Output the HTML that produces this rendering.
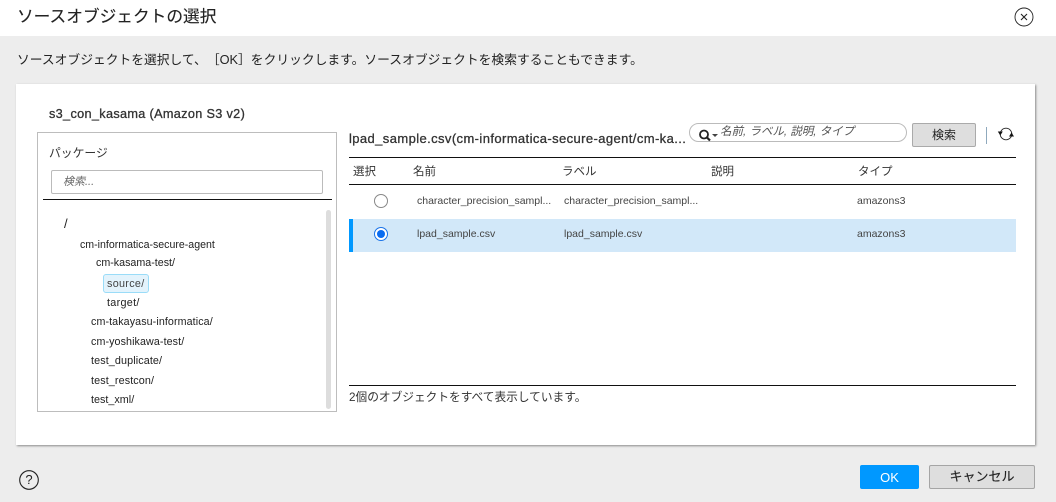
<!DOCTYPE html>
<html lang="ja"><head><meta charset="utf-8"><title>ソースオブジェクトの選択</title>
<style>
html,body{margin:0;padding:0;width:1056px;height:502px;overflow:hidden;background:#ededed}
body{position:relative;font-family:"Liberation Sans","Noto Sans CJK JP",sans-serif;color:#222;text-spacing-trim:space-all}
.a,.t{position:absolute}
.t{white-space:nowrap;line-height:16px;font-size:11px}
.m{-webkit-text-stroke:.3px currentColor}
.l{-webkit-text-stroke:.12px currentColor}
</style></head><body>
<div class="a" style="left:0;top:0;width:1056px;height:36px;background:#fff"></div>
<div class="t l" style="left:17px;top:6px;font-size:16.700px;line-height:22px;color:#222">ソースオブジェクトの選択</div>
<svg class="a" style="left:1014px;top:7px" width="20" height="20" viewBox="0 0 20 20" fill="none" stroke="#222"><circle cx="10" cy="10" r="9" stroke-width=".9"/><path d="M7 7l6 6M13 7l-6 6" stroke-width="1.100"/></svg>
<div class="t" style="left:17px;top:52px;font-size:12.770px;color:#222">ソースオブジェクトを選択して、［OK］をクリックします。ソースオブジェクトを検索することもできます。</div>

<div class="a" style="left:16px;top:84px;width:1019px;height:361px;background:#fff;box-shadow:1px 1px 2px #8a8a8a"></div>
<div class="t m" style="left:49px;top:106px;font-size:12.700px;letter-spacing:.33px;color:#333">s3_con_kasama (Amazon S3 v2)</div>

<div class="a" style="left:37px;top:132px;width:298px;height:278px;border:1px solid #bdbdbd"></div>
<div class="t" style="left:49px;top:145px;font-size:11.800px;color:#333">パッケージ</div>
<div class="a" style="left:51px;top:170px;width:270px;height:22px;border:1px solid #bbb;border-radius:2px"></div>
<div class="t" style="left:63px;top:174px;font-size:11px;font-style:italic;color:#666">検索...</div>
<div class="a" style="left:43px;top:199px;width:289px;height:1px;background:#111"></div>
<div class="a" style="left:326px;top:210px;width:5px;height:199px;background:#ddd;border-radius:3px"></div>

<div class="t" style="left:64px;top:216px;font-size:13px">/</div>
<div class="t" style="left:80px;top:237px;font-size:10.600px">cm-informatica-secure-agent</div>
<div class="t" style="left:96px;top:255px;font-size:10.700px">cm-kasama-test/</div>
<div class="a" style="left:103px;top:274px;width:44px;height:17px;background:#e3f3fc;border:1px solid #9adcf8;border-radius:3px"></div>
<div class="t" style="left:107px;top:276px;font-size:10.800px;letter-spacing:.3px;color:#444">source/</div>
<div class="t" style="left:107px;top:295px;font-size:10.800px;letter-spacing:.3px">target/</div>
<div class="t" style="left:91px;top:314px;font-size:10.700px;letter-spacing:.1px">cm-takayasu-informatica/</div>
<div class="t" style="left:91px;top:334px;font-size:10.700px;letter-spacing:.1px">cm-yoshikawa-test/</div>
<div class="t" style="left:91px;top:353px;font-size:10.800px;letter-spacing:.1px">test_duplicate/</div>
<div class="t" style="left:91px;top:373px;font-size:10.800px;letter-spacing:.1px">test_restcon/</div>
<div class="t" style="left:91px;top:392px;font-size:10.800px">test_xml/</div>

<div class="t m" style="left:349px;top:131px;font-size:13px;letter-spacing:.4px;color:#333">lpad_sample.csv(cm-informatica-secure-agent/cm-ka...</div>
<div class="a" style="left:689px;top:123px;width:216px;height:17px;border:1px solid #bbb;border-radius:10px"></div>
<svg class="a" style="left:698px;top:128px" width="22" height="14" viewBox="0 0 22 14" fill="none" stroke="#222"><circle cx="6" cy="6.500" r="4" stroke-width="1.800"/><path d="M9 9.500l3 3" stroke-width="2.200"/><path d="M14 6h6l-3 3z" fill="#444" stroke="none"/></svg>
<div class="t" style="left:720px;top:124px;font-size:11.500px;font-style:italic;color:#555">名前, ラベル, 説明, タイプ</div>
<div class="a" style="left:912px;top:123px;width:62px;height:22px;background:#dedede;border:1px solid #aaa;border-radius:2px"></div>
<div class="t" style="left:912px;top:127px;width:64px;text-align:center;font-size:12px">検索</div>
<div class="a" style="left:986px;top:127px;width:1px;height:17px;background:#8fa9bd"></div>
<svg class="a" style="left:997px;top:126px" width="18" height="16" viewBox="0 0 18 16" fill="none" stroke="#222" stroke-width=".9"><circle cx="9" cy="8" r="5.800"/><path d="M0.800 5.500h5L3.300 9.500zM17 10.500h-5L14.500 6.500z" fill="#111" stroke="none"/></svg>

<div class="a" style="left:349px;top:157px;width:667px;height:1px;background:#111"></div>
<div class="a" style="left:349px;top:184px;width:667px;height:1px;background:#111"></div>
<div class="t" style="left:353px;top:164px;font-size:11.500px;color:#333">選択</div>
<div class="t" style="left:413px;top:164px;font-size:11.500px;color:#333">名前</div>
<div class="t" style="left:562px;top:164px;font-size:11.500px;color:#333">ラベル</div>
<div class="t" style="left:711px;top:164px;font-size:11.500px;color:#333">説明</div>
<div class="t" style="left:858px;top:164px;font-size:11.500px;color:#333">タイプ</div>

<div class="a" style="left:374px;top:194px;width:12px;height:12px;border:1px solid #888;border-radius:50%"></div>
<div class="t" style="left:417px;top:193px;font-size:10.500px;color:#444">character_precision_sampl...</div>
<div class="t" style="left:564px;top:193px;font-size:10.500px;color:#444">character_precision_sampl...</div>
<div class="t" style="left:857px;top:193px;font-size:10.500px;color:#444">amazons3</div>

<div class="a" style="left:349px;top:219px;width:667px;height:33px;background:#d2e8f9"></div>
<div class="a" style="left:349px;top:219px;width:4px;height:33px;background:#0098ff"></div>
<div class="a" style="left:374px;top:227px;width:12px;height:12px;border:1px solid #1a73e8;border-radius:50%;background:#fff"></div>
<div class="a" style="left:377px;top:230px;width:8px;height:8px;border-radius:50%;background:#0a6cf0"></div>
<div class="t" style="left:417px;top:226px;font-size:10.500px;color:#444">lpad_sample.csv</div>
<div class="t" style="left:564px;top:226px;font-size:10.500px;color:#444">lpad_sample.csv</div>
<div class="t" style="left:857px;top:226px;font-size:10.500px;color:#444">amazons3</div>

<div class="a" style="left:349px;top:385px;width:667px;height:1px;background:#111"></div>
<div class="t" style="left:349px;top:390px;font-size:11.700px;color:#333">2個のオブジェクトをすべて表示しています。</div>

<svg class="a" style="left:18px;top:469px" width="22" height="22" viewBox="0 0 22 22" fill="none" stroke="#222"><circle cx="11" cy="11" r="9.300" stroke-width="1.100"/></svg>
<div class="t" style="left:18px;top:472px;width:22px;text-align:center;font-size:13px">?</div>
<div class="a" style="left:860px;top:465px;width:59px;height:24px;background:#0098ff;border-radius:2px"></div>
<div class="t" style="left:860px;top:470px;width:59px;text-align:center;font-size:13px;color:#fff">OK</div>
<div class="a" style="left:929px;top:465px;width:104px;height:22px;background:#dedede;border:1px solid #a5a5a5;border-radius:2px"></div>
<div class="t l" style="left:929px;top:469px;width:106px;text-align:center;font-size:13px;color:#222">キャンセル</div>
</body></html>
